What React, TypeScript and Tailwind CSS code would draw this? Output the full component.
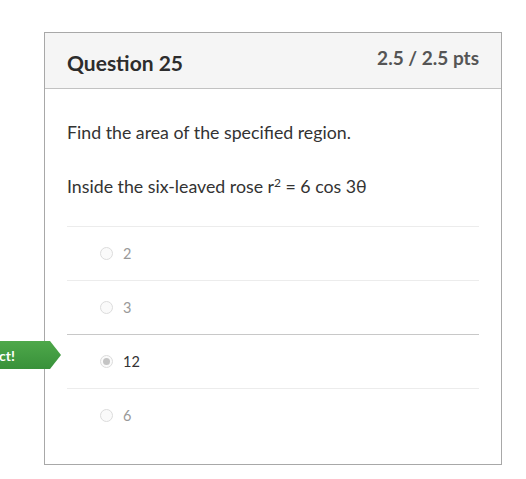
const answers = [
	{ label: "2", selected: false },
	{ label: "3", selected: false },
	{ label: "12", selected: true },
	{ label: "6", selected: false },
];

function Radio({ checked }: { checked: boolean }) {
	return (
		<span className="flex h-[13px] w-[13px] items-center justify-center rounded-full border border-[#dcdcdc] bg-[#fafafa]">
			{checked && <span className="h-[7px] w-[7px] rounded-full bg-[#c4c4c4]" />}
		</span>
	);
}

export default function App() {
	return (
		<div className="relative min-h-[479px] w-[526px] overflow-hidden bg-white pl-[44px] pt-[32px] font-['Lato',sans-serif]">
			<div className="w-[458px] border border-[#a8a8a8]">
				<div className="flex h-[56px] items-start justify-between border-b border-[#c2c2c2] bg-[#f5f5f5] px-[22px]">
					<h2 className="mt-[14px] text-[21px] font-bold text-[#2d2d2d]">Question 25</h2>
					<span className="mt-[11px] text-[19px] font-bold text-[#555]">2.5 / 2.5 pts</span>
				</div>
				<div className="px-[22px] pb-[22px] pt-[31px] text-[17.75px] text-[#333]">
					<p className="leading-[24px]">Find the area of the specified region.</p>
					<p className="mt-[30px] leading-[24px]">
						Inside the six-leaved rose r<sup className="text-[12px]">2</sup> = 6 cos 3θ
					</p>
					<div className="mt-[28px]">
						{answers.map((a) => (
							<div
								key={a.label}
								className={
									"flex h-[54px] items-center border-t pl-[33px] " +
									(a.selected ? "border-[#c8c8c8]" : "border-[#ececec]")
								}
							>
								<Radio checked={a.selected} />
								<span
									className={
										"ml-[10px] text-[14.5px] " + (a.selected ? "text-[#333]" : "text-[#999]")
									}
								>
									{a.label}
								</span>
							</div>
						))}
					</div>
				</div>
			</div>
			<div className="absolute left-[-60px] top-[341px] flex h-[28px] w-[121px] items-center justify-end bg-gradient-to-b from-[#4ea84a] to-[#38913a] pr-[46px] text-[14px] font-bold text-white [clip-path:polygon(0_0,110px_0,121px_50%,110px_100%,0_100%)]">
				<span className="whitespace-nowrap">Correct!</span>
			</div>
		</div>
	);
}
